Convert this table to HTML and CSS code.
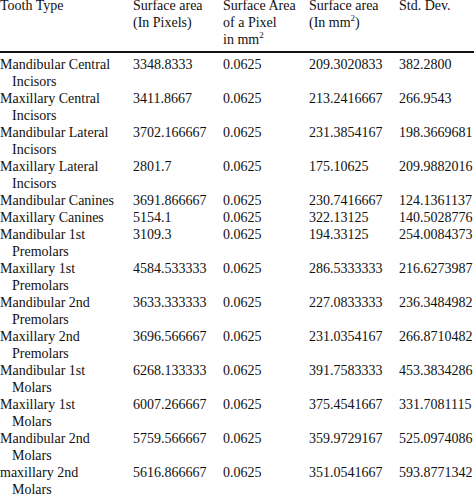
FILE: index.html
```html
<!DOCTYPE html>
<html lang="en">
<head>
<meta charset="utf-8">
<title>Tooth surface area</title>
<link rel="stylesheet" href="styles.css">
</head>
<body>
<table class="data">
  <colgroup>
    <col class="c-type"><col class="c-px"><col class="c-unit"><col class="c-mm"><col class="c-sd">
  </colgroup>
  <thead>
    <tr>
      <th>Tooth Type</th>
      <th>Surface area<br>(In Pixels)</th>
      <th>Surface Area<br>of a Pixel<br>in mm<sup>2</sup></th>
      <th>Surface area<br>(In mm<sup>2</sup>)</th>
      <th>Std. Dev.</th>
    </tr>
  </thead>
  <tbody>
    <tr><td class="name">Mandibular Central<br>Incisors</td><td>3348.8333</td><td>0.0625</td><td>209.3020833</td><td>382.2800</td></tr>
    <tr><td class="name">Maxillary Central<br>Incisors</td><td>3411.8667</td><td>0.0625</td><td>213.2416667</td><td>266.9543</td></tr>
    <tr><td class="name">Mandibular Lateral<br>Incisors</td><td>3702.166667</td><td>0.0625</td><td>231.3854167</td><td>198.3669681</td></tr>
    <tr><td class="name">Maxillary Lateral<br>Incisors</td><td>2801.7</td><td>0.0625</td><td>175.10625</td><td>209.9882016</td></tr>
    <tr><td class="name">Mandibular Canines</td><td>3691.866667</td><td>0.0625</td><td>230.7416667</td><td>124.1361137</td></tr>
    <tr><td class="name">Maxillary Canines</td><td>5154.1</td><td>0.0625</td><td>322.13125</td><td>140.5028776</td></tr>
    <tr><td class="name">Mandibular 1st<br>Premolars</td><td>3109.3</td><td>0.0625</td><td>194.33125</td><td>254.0084373</td></tr>
    <tr><td class="name">Maxillary 1st<br>Premolars</td><td>4584.533333</td><td>0.0625</td><td>286.5333333</td><td>216.6273987</td></tr>
    <tr><td class="name">Mandibular 2nd<br>Premolars</td><td>3633.333333</td><td>0.0625</td><td>227.0833333</td><td>236.3484982</td></tr>
    <tr><td class="name">Maxillary 2nd<br>Premolars</td><td>3696.566667</td><td>0.0625</td><td>231.0354167</td><td>266.8710482</td></tr>
    <tr><td class="name">Mandibular 1st<br>Molars</td><td>6268.133333</td><td>0.0625</td><td>391.7583333</td><td>453.3834286</td></tr>
    <tr><td class="name">Maxillary 1st<br>Molars</td><td>6007.266667</td><td>0.0625</td><td>375.4541667</td><td>331.7081115</td></tr>
    <tr><td class="name">Mandibular 2nd<br>Molars</td><td>5759.566667</td><td>0.0625</td><td>359.9729167</td><td>525.0974086</td></tr>
    <tr><td class="name">maxillary 2nd<br>Molars</td><td>5616.866667</td><td>0.0625</td><td>351.0541667</td><td>593.8771342</td></tr>
  </tbody>
</table>
</body>
</html>
```
FILE: styles.css
```css
html, body {
  margin: 0;
  padding: 0;
  background: #ffffff;
  overflow: hidden;
}

body {
  width: 474px;
  height: 497px;
  font-family: "Liberation Serif", "Times New Roman", serif;
  font-size: 14px;
  line-height: 17px;
  color: #111111;
}

.data {
  border-collapse: collapse;
  table-layout: fixed;
  width: 519px;
  margin-top: -3px;
}

.c-type { width: 133px; }
.c-px { width: 90px; }
.c-unit { width: 86px; }
.c-mm { width: 90px; }
.c-sd { width: 120px; }

.data th,
.data td {
  padding: 0;
  text-align: left;
  vertical-align: top;
  white-space: nowrap;
  font-weight: normal;
}

.data thead th {
  padding-bottom: 3px;
  border-bottom: 2px solid #111111;
}

.data tbody tr:first-child td {
  padding-top: 3px;
}

.data td.name {
  padding-left: 12px;
  text-indent: -12px;
}

sup {
  font-size: 9px;
  line-height: 0;
  vertical-align: 6px;
}
```
